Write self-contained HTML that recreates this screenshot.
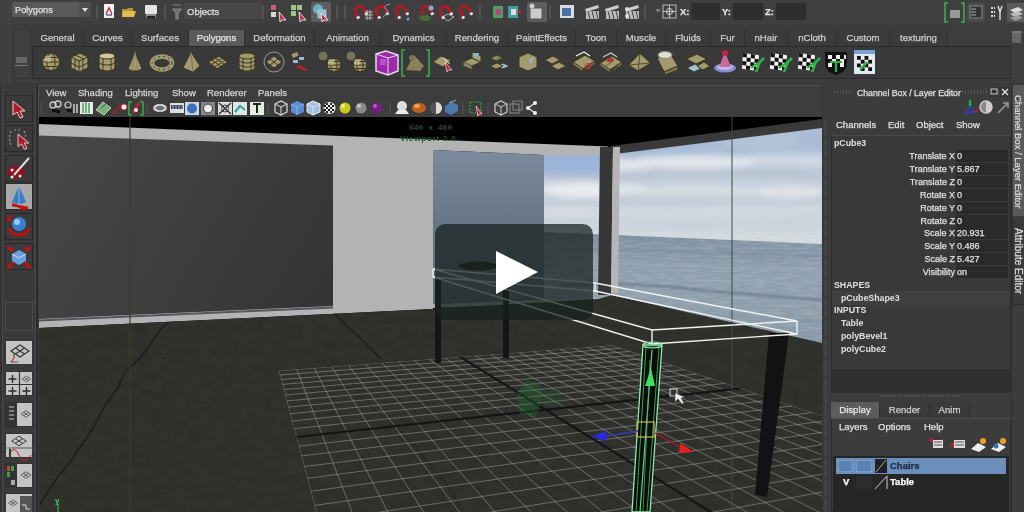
<!DOCTYPE html>
<html><head><meta charset="utf-8">
<style>
*{box-sizing:border-box;margin:0;padding:0}
html,body{width:1024px;height:512px;overflow:hidden;background:#3d3d3d;font-family:"Liberation Sans",sans-serif;color:#d6d6d6}
.a{position:absolute}
.t{position:absolute;white-space:nowrap;font-size:9.5px;line-height:12px}
.tab{position:absolute;top:30px;height:16px;background:#3b3b3b;border-right:1px solid #2f2f2f;font-size:9.6px;line-height:16px;text-align:center;color:#d0d0d0}
.tb{position:absolute;left:5px;width:28px;height:27px;background:#3a3a3a;border:1px solid #2a2a2a}
.lb{position:absolute;left:5px;width:28px;height:25px;background:#c4c4c4;border:1px solid #333}
.ch{position:absolute;left:834px;width:121px;text-align:right;font-size:9px;line-height:13px;color:#e0e0e0}
.cv{position:absolute;left:956px;width:52px;height:12px;background:#2a2a2a;font-size:9px;line-height:13px;color:#e0e0e0;padding-left:1px}
.it{position:absolute;font-size:8.8px;line-height:13px;color:#e0e0e0;font-weight:bold}
.t,.tab,.ch,.cv{-webkit-text-stroke:0.25px currentColor}
#w{position:absolute;left:0;top:0;width:1024px;height:512px;overflow:hidden;filter:blur(0.6px)}
</style></head><body><div id="w">
<!-- top toolbar -->
<div class="a" style="left:0;top:0;width:1024px;height:24px;background:#3f3f3f"></div>
<div class="a" style="left:12px;top:2px;width:79px;height:15px;background:#595959;border-radius:2px"></div>
<div class="a" style="left:79px;top:2px;width:12px;height:15px;background:#4f4f4f"></div>
<div class="t" style="left:15px;top:4px;color:#e0e0e0;font-size:9.2px">Polygons</div>
<div class="a" style="left:82px;top:8px;width:0;height:0;border-left:3px solid transparent;border-right:3px solid transparent;border-top:4px solid #ddd"></div>
<div class="a" style="left:184px;top:3px;width:78px;height:16px;background:#474747"></div>
<div class="t" style="left:187px;top:6px;color:#e0e0e0">Objects</div>
<div class="a" style="left:311px;top:2px;width:20px;height:20px;background:#5d5d5d;border-radius:2px"></div>
<div class="a" style="left:527px;top:2px;width:20px;height:20px;background:#5d5d5d;border-radius:2px"></div>
<div class="t" style="left:680px;top:6px;color:#e0e0e0;font-weight:bold">X:</div>
<div class="a" style="left:691px;top:3px;width:29px;height:17px;background:#2e2e2e"></div>
<div class="t" style="left:722px;top:6px;color:#e0e0e0;font-weight:bold">Y:</div>
<div class="a" style="left:733px;top:3px;width:30px;height:17px;background:#2e2e2e"></div>
<div class="t" style="left:765px;top:6px;color:#e0e0e0;font-weight:bold">Z:</div>
<div class="a" style="left:776px;top:3px;width:30px;height:17px;background:#2e2e2e"></div>
<!-- TOPICONS -->

<!-- shelf -->
<div class="a" style="left:0;top:24px;width:1024px;height:60px;background:#3d3d3d"></div>
<div class="a" style="left:13px;top:29px;width:18px;height:50px;background:#3f3f3f;border:1px solid #363636"></div>
<div class="a" style="left:16px;top:57px;width:11px;height:6px;background:#666"></div>
<div class="a" style="left:15px;top:65px;width:13px;height:1px;background:#777"></div>
<div class="tab" style="left:32px;width:52px">General</div>
<div class="tab" style="left:84px;width:48px">Curves</div>
<div class="tab" style="left:132px;width:57px">Surfaces</div>
<div class="tab" style="left:189px;width:56px;background:#5a5a5a;color:#e6e6e6">Polygons</div>
<div class="tab" style="left:245px;width:70px">Deformation</div>
<div class="tab" style="left:315px;width:66px">Animation</div>
<div class="tab" style="left:381px;width:66px">Dynamics</div>
<div class="tab" style="left:447px;width:61px">Rendering</div>
<div class="tab" style="left:508px;width:68px">PaintEffects</div>
<div class="tab" style="left:576px;width:41px">Toon</div>
<div class="tab" style="left:617px;width:49px">Muscle</div>
<div class="tab" style="left:666px;width:45px">Fluids</div>
<div class="tab" style="left:711px;width:34px">Fur</div>
<div class="tab" style="left:745px;width:43px">nHair</div>
<div class="tab" style="left:788px;width:49px">nCloth</div>
<div class="tab" style="left:837px;width:53px">Custom</div>
<div class="tab" style="left:890px;width:58px">texturing</div>
<div class="a" style="left:32px;top:46px;width:979px;height:33px;background:#393939;border:1px solid #2c2c2c;border-top-color:#2a2a2a"></div>
<div class="a" style="left:1012px;top:31px;width:9px;height:12px;background:#666;border-radius:2px"></div>
<!-- SHELFICONS -->
<div class="a" style="left:0;top:83px;width:1024px;height:2px;background:#3a3a3a"></div>

<!-- left toolbox -->
<div class="a" style="left:0;top:85px;width:38px;height:427px;background:#3a3a3a"></div>
<div class="a" style="left:0px;top:85px;width:2px;height:427px;background:#333"></div><div class="a" style="left:2px;top:85px;width:1px;height:427px;background:#484848"></div>
<div class="a" style="left:35px;top:85px;width:1px;height:427px;background:#4a4a4a"></div><div class="a" style="left:36px;top:85px;width:2px;height:427px;background:#2a2a2a"></div>
<div class="tb" style="top:95px"></div>
<div class="tb" style="top:125px"></div>
<div class="tb" style="top:155px"></div>
<div class="tb" style="top:183px;background:#a9a9a9"></div>
<div class="tb" style="top:213px"></div>
<div class="tb" style="top:243px"></div>
<div class="tb" style="top:302px;height:29px;background:#3a3a3a;border-color:#4a4a4a"></div>
<div class="lb" style="top:340px"></div>
<div class="lb" style="top:371px"></div>
<div class="lb" style="top:402px"></div>
<div class="lb" style="top:433px"></div>
<div class="lb" style="top:463px"></div>
<div class="lb" style="top:493px;height:22px"></div>
<!-- TOOLICONS -->

<!-- viewport panel -->
<div class="a" style="left:38px;top:85px;width:784px;height:32px;background:#3d3d3d;border-top:1px solid #4f4f4f;border-left:1px solid #4f4f4f"></div>
<div class="t" style="left:46px;top:87px">View</div>
<div class="t" style="left:78px;top:87px">Shading</div>
<div class="t" style="left:125px;top:87px">Lighting</div>
<div class="t" style="left:172px;top:87px">Show</div>
<div class="t" style="left:207px;top:87px">Renderer</div>
<div class="t" style="left:258px;top:87px">Panels</div>
<!-- VPICONS -->

<svg class="a" style="left:39px;top:117px" width="783" height="395" viewBox="39 117 783 395">
<defs>
<linearGradient id="sky" x1="0" y1="150" x2="0" y2="244" gradientUnits="userSpaceOnUse">
<stop offset="0" stop-color="#aabdd6"/><stop offset=".3" stop-color="#c3cedc"/><stop offset=".6" stop-color="#c9d2dc"/><stop offset=".85" stop-color="#ced7de"/><stop offset="1" stop-color="#d2dadf"/></linearGradient>
<linearGradient id="sea" x1="0" y1="232" x2="0" y2="345" gradientUnits="userSpaceOnUse">
<stop offset="0" stop-color="#7a8b9e"/><stop offset=".1" stop-color="#8495a6"/><stop offset=".4" stop-color="#8fa0ae"/><stop offset=".8" stop-color="#8c9dab"/><stop offset="1" stop-color="#8797a6"/></linearGradient>
<linearGradient id="glass" x1="0" y1="150" x2="0" y2="305" gradientUnits="userSpaceOnUse">
<stop offset="0" stop-color="#7b8b9d"/><stop offset=".48" stop-color="#677686"/><stop offset="1" stop-color="#5f6d7a"/></linearGradient>
<linearGradient id="dpanel" x1="39" y1="135" x2="333" y2="306" gradientUnits="userSpaceOnUse">
<stop offset="0" stop-color="#484848"/><stop offset="1" stop-color="#343434"/></linearGradient>
<filter id="noise" x="0" y="0" width="100%" height="100%" color-interpolation-filters="sRGB"><feTurbulence type="fractalNoise" baseFrequency="0.08 0.12" numOctaves="4" seed="3"/><feColorMatrix type="matrix" values="0 0 0 0 0.13  0 0 0 0 0.13  0 0 0 0 0.12  0 0 0 -2.2 1.25"/></filter>
<filter id="noise2" x="0" y="0" width="100%" height="100%"><feTurbulence type="fractalNoise" baseFrequency="0.06 0.4" numOctaves="3" seed="7"/><feColorMatrix type="matrix" values="0 0 0 0 1  0 0 0 0 1  0 0 0 0 1  0 0 0 -1.2 0.75"/></filter>
<filter id="blur3"><feGaussianBlur stdDeviation="3"/></filter>
<filter id="blur1"><feGaussianBlur stdDeviation="1"/></filter>
<clipPath id="skyclip"><polygon points="544,155 618,153 822,127 822,345 544,345"/></clipPath>
<clipPath id="gridclip"><polygon points="278.8,370.7 612.2,345.3 1003.6,476.7 341.5,607.3"/></clipPath>
</defs>
<rect x="39" y="117" width="783" height="395" fill="#000"/>
<g clip-path="url(#skyclip)">
<rect x="544" y="117" width="278" height="130" fill="url(#sky)"/>
<g filter="url(#blur3)">
<ellipse cx="660" cy="152" rx="50" ry="6" fill="#a6bbd6"/>
<ellipse cx="760" cy="140" rx="40" ry="8" fill="#b4c4d8"/>
<ellipse cx="593" cy="165" rx="63" ry="7" fill="#e6e9ed" opacity="0.90"/>
<ellipse cx="693" cy="162" rx="64" ry="7" fill="#e6e9ed" opacity="0.90"/>
<ellipse cx="802" cy="160" rx="72" ry="7" fill="#e6e9ed" opacity="0.54"/>
<ellipse cx="597" cy="176" rx="67" ry="4" fill="#b7c2d0" opacity="0.90"/>
<ellipse cx="691" cy="173" rx="46" ry="4" fill="#b7c2d0" opacity="0.72"/>
<ellipse cx="772" cy="173" rx="44" ry="4" fill="#b7c2d0" opacity="0.90"/>
<ellipse cx="870" cy="178" rx="79" ry="4" fill="#b7c2d0" opacity="0.54"/>
<ellipse cx="590" cy="189" rx="60" ry="6" fill="#e3e7eb" opacity="0.85"/>
<ellipse cx="701" cy="191" rx="74" ry="6" fill="#e3e7eb" opacity="0.51"/>
<ellipse cx="791" cy="192" rx="35" ry="6" fill="#e3e7eb" opacity="0.85"/>
<ellipse cx="862" cy="186" rx="38" ry="6" fill="#e3e7eb" opacity="0.51"/>
<ellipse cx="580" cy="202" rx="50" ry="4" fill="#bfc9d5" opacity="0.48"/>
<ellipse cx="670" cy="200" rx="64" ry="4" fill="#bfc9d5" opacity="0.64"/>
<ellipse cx="763" cy="202" rx="47" ry="4" fill="#bfc9d5" opacity="0.48"/>
<ellipse cx="843" cy="201" rx="53" ry="4" fill="#bfc9d5" opacity="0.48"/>
<ellipse cx="570" cy="212" rx="40" ry="5" fill="#dde2e7" opacity="0.60"/>
<ellipse cx="663" cy="213" rx="61" ry="5" fill="#dde2e7" opacity="0.36"/>
<ellipse cx="753" cy="211" rx="51" ry="5" fill="#dde2e7" opacity="0.36"/>
<ellipse cx="841" cy="209" rx="53" ry="5" fill="#dde2e7" opacity="0.36"/>
<ellipse cx="571" cy="224" rx="41" ry="3" fill="#c6cfd8" opacity="0.36"/>
<ellipse cx="638" cy="224" rx="53" ry="3" fill="#c6cfd8" opacity="0.36"/>
<ellipse cx="697" cy="227" rx="36" ry="3" fill="#c6cfd8" opacity="0.60"/>
<ellipse cx="781" cy="222" rx="48" ry="3" fill="#c6cfd8" opacity="0.36"/>
<ellipse cx="873" cy="226" rx="59" ry="3" fill="#c6cfd8" opacity="0.48"/>
<rect x="530" y="140" width="75" height="34" fill="#9cb5d8"/>
<ellipse cx="585" cy="190" rx="40" ry="8" fill="#e8ebef"/>
</g>
<polygon points="544,232 822,244 822,345 544,345" fill="url(#sea)"/>
<rect x="544" y="232" width="278" height="113" filter="url(#noise2)" opacity=".25"/>
<g filter="url(#blur1)" opacity=".6">
<path d="M560 285 Q620 282 680 288 T822 300" stroke="#5a6a7a" stroke-width="2.5" fill="none"/>
<path d="M560 262 L822 270" stroke="#9aabb8" stroke-width="3" fill="none"/><path d="M560 248 L822 256" stroke="#76889a" stroke-width="2" fill="none"/>
<path d="M560 305 L822 322" stroke="#7c8d9c" stroke-width="2" fill="none"/>
</g>
</g>
<!-- white wall -->
<polygon points="39,124 608,146.5 608,155 544,155 433,150 433,309 39,328" fill="#b3b3b3"/>
<!-- dark panel -->
<polygon points="39,135.5 333,145.5 333,306 39,319" fill="url(#dpanel)"/>
<polygon points="39,319.5 333,306.5 333,308.5 39,321.5" fill="#55565c"/>
<!-- glass -->
<polygon points="433,150 544,155 544,299 433,304" fill="url(#glass)"/>
<polygon points="433,304 600,297 600,301 433,308" fill="#a8aaae"/>
<!-- beam -->
<polygon points="611,146 822,119 822,128 611,154.5" fill="#393939"/>
<!-- pillar -->
<polygon points="600,147 613,147 611,295 598,295" fill="#363636"/>
<polygon points="613,147 620,147 618,293 611,293" fill="#b5b5b5"/>
<!-- floor -->
<polygon points="39,328 433,309 598,299 612,295 822,343 822,512 39,512" fill="#31312d"/>
<clipPath id="floorclip"><polygon points="39,328 433,309 598,299 612,295 822,343 822,512 39,512"/></clipPath>
<g clip-path="url(#floorclip)"><rect x="39" y="290" width="783" height="222" filter="url(#noise)" opacity=".22"/></g>
<g stroke="#1f1d1d" fill="none" stroke-width="1.6" stroke-linejoin="round">
<path d="M167 323L160 330L150 345L138 360L125 372L118 388L105 405L92 430L80 447L70 462L57 478L45 496L40 505"/>
<path d="M335 314L345 324L360 338L372 350L381 359"/>
<path d="M360 395L375 410L390 422L410 440L428 462L445 482L460 505" opacity=".5"/>
</g>
<g fill="#252321" opacity=".7"><ellipse cx="120" cy="380" rx="1.5" ry="2.5"/><ellipse cx="149" cy="390" rx="1.5" ry="1.5"/><ellipse cx="165" cy="358" rx="1" ry="1"/></g>
<!-- grid -->
<g clip-path="url(#gridclip)">
<path d="M278.8 370.7L349.4 637.1M296.7 369.3L396.6 627.0M314.3 368.0L441.5 617.5M331.6 366.7L484.5 608.3M348.7 365.4L525.5 599.6M365.4 364.1L564.7 591.2M381.9 362.8L602.3 583.2M398.0 361.6L638.4 575.5M414.0 360.4L672.9 568.2M429.6 359.2L706.1 561.1M445.0 358.0L738.0 554.3M475.1 355.7L798.2 541.5M489.8 354.6L826.6 535.5M504.2 353.5L854.0 529.6M518.5 352.4L880.4 524.0M532.5 351.3L905.9 518.6M546.3 350.3L930.5 513.3M559.9 349.3L954.3 508.3M573.2 348.2L977.3 503.4M586.4 347.2L999.5 498.6M599.4 346.2L1021.1 494.0M612.2 345.3L1041.9 489.6M278.8 370.7L612.2 345.3M279.9 375.0L621.1 348.2M281.1 379.6L630.4 351.4M282.4 384.4L640.2 354.7M283.8 389.6L650.5 358.1M285.2 395.0L661.4 361.8M286.8 400.9L672.8 365.6M288.4 407.1L684.8 369.7M290.2 413.8L697.6 373.9M292.1 421.0L711.1 378.5M294.2 428.7L725.4 383.3M298.8 446.1L756.8 393.8M301.4 455.9L774.1 399.6M304.2 466.6L792.6 405.8M307.3 478.3L812.3 412.5M310.8 491.3L833.6 419.6M314.5 505.5L856.5 427.3M318.7 521.4L881.2 435.6M323.4 539.1L908.0 444.6M328.7 559.0L937.1 454.4M334.7 581.6L968.9 465.1M341.5 607.3L1003.6 476.7" stroke="#a8a8a8" stroke-width="1" fill="none" opacity=".5"/>
<path d="M460.2 356.9L768.6 547.8" stroke="#141414" stroke-width="2.2"/>
<path d="M296.4 437.0L740.6 388.4" stroke="#141414" stroke-width="2.2"/>
</g>
<!-- green transparent chair -->
<g opacity=".3" fill="#1f7a34"><polygon points="517,392 526,381 540,383 542,400 536,416 520,414"/><polygon points="540,390 560,388 562,405 545,408" opacity=".6"/></g>
<!-- table legs -->
<polygon points="435,277 441,277 441,363 435,363" fill="#141414"/>
<polygon points="503,283 509,283 509,358 503,358" fill="#141414"/>
<polygon points="769,333 789,333 767,497 755,495" fill="#121212"/>
<!-- green vertical lines -->
<path d="M130 117V512" stroke="#234a30" stroke-width="1.2"/>
<path d="M732 117V512" stroke="#2a5444" stroke-width="1"/>
<!-- table top wireframe -->
<g stroke="#f2f2f2" stroke-width="1.4" fill="none">
<path d="M433 269L595 283L797 321L652 330Z"/>
<path d="M433 277L652 344L797 334"/>
<path d="M433 269V277M652 330V344M797 321V334"/>
<path d="M433 277L595 291L797 334"/><path d="M595 283V291"/>
</g>
<!-- selected leg -->
<polygon points="643,345 662,345 650,512 632,512" fill="#0c0c0c" stroke="#8ef0a8" stroke-width="1.3"/>
<polygon points="646,347 659,347 647,512 636,512" fill="none" stroke="#49c86a" stroke-width=".8"/>
<ellipse cx="652.5" cy="345" rx="9.5" ry="3" fill="none" stroke="#8ef0a8" stroke-width="1.2"/>
<path d="M652 350L640 512" stroke="#5fd880" stroke-width="1.2"/>
<path d="M650 360L643 512" stroke="#3fb060" stroke-width=".8"/>
<polygon points="651,368 645,386 655,386" fill="#3fe060"/>
<rect x="637" y="422" width="17" height="15" fill="none" stroke="#c9b84a" stroke-width="1.2"/>
<path d="M606 436L638 431" stroke="#3040b0" stroke-width="2" opacity=".8"/>
<polygon points="591,437 606,431 607,441" fill="#2a2ae0"/>
<path d="M655 433L680 447" stroke="#a02020" stroke-width="1.5" opacity=".8"/>
<polygon points="680,443 694,452 679,453" fill="#e02020"/>
<!-- cursor -->
<rect x="670" y="389" width="7" height="7" fill="none" stroke="#ddd" stroke-width="1"/>
<path d="M675 393 L675 402 L678 399 L682 404 L684 403 L681 398 L685 397 Z" fill="#eee" stroke="#333" stroke-width=".5"/>
<!-- viewport HUD text -->
<text x="409" y="130" font-family="Liberation Mono" font-size="8" font-weight="bold" fill="#2a4a3a">640 x 480</text>
<text x="400" y="141" font-family="Liberation Sans" font-size="8" font-weight="bold" letter-spacing=".8" fill="#1d5a2e">Viewport 2.0</text>
<text x="55" y="503" font-family="Liberation Sans" font-size="8" font-weight="bold" fill="#3fd050">y</text><path d="M58 504V512" stroke="#3fd050" stroke-width="1"/>
<ellipse cx="478" cy="266" rx="19" ry="4.5" fill="#222"/>
<!-- play overlay -->
<rect x="435" y="224" width="158" height="96" rx="10" fill="#17221f" opacity=".74"/>
<polygon points="496,251 538,272 496,294" fill="#fff"/>

</svg>

<!-- right panel -->
<div class="a" style="left:822px;top:85px;width:202px;height:427px;background:#3c3c3c"></div>
<div class="a" style="left:822px;top:85px;width:1px;height:427px;background:#333"></div>
<div class="t" style="left:857px;top:87px;color:#e0e0e0;font-size:8.7px">Channel Box / Layer Editor</div>
<div class="t" style="left:836px;top:119px;color:#e0e0e0">Channels</div>
<div class="t" style="left:888px;top:119px;color:#e0e0e0">Edit</div>
<div class="t" style="left:916px;top:119px;color:#e0e0e0">Object</div>
<div class="t" style="left:956px;top:119px;color:#e0e0e0">Show</div>
<div class="a" style="left:831px;top:135px;width:180px;height:258px;background:#393939;border:1px solid #2e2e2e;border-top-color:#4a4a4a"></div>
<div class="a" style="left:832px;top:369px;width:178px;height:23px;background:#303030"></div>
<div class="a" style="left:832px;top:291px;width:178px;height:14px;background:#3f3f3f"></div>
<div class="it" style="left:834px;top:137px">pCube3</div>
<div class="ch" style="top:150px">Translate X</div><div class="cv" style="top:150px">0</div>
<div class="ch" style="top:163px">Translate Y</div><div class="cv" style="top:163px">5.867</div>
<div class="ch" style="top:176px">Translate Z</div><div class="cv" style="top:176px">0</div>
<div class="ch" style="top:189px">Rotate X</div><div class="cv" style="top:189px">0</div>
<div class="ch" style="top:202px">Rotate Y</div><div class="cv" style="top:202px">0</div>
<div class="ch" style="top:215px">Rotate Z</div><div class="cv" style="top:215px">0</div>
<div class="ch" style="top:227px">Scale X</div><div class="cv" style="top:227px">20.931</div>
<div class="ch" style="top:240px">Scale Y</div><div class="cv" style="top:240px">0.486</div>
<div class="ch" style="top:253px">Scale Z</div><div class="cv" style="top:253px">5.427</div>
<div class="ch" style="top:266px">Visibility</div><div class="cv" style="top:266px">on</div>
<div class="it" style="left:834px;top:279px">SHAPES</div>
<div class="it" style="left:841px;top:292px">pCubeShape3</div>
<div class="it" style="left:834px;top:304px">INPUTS</div>
<div class="it" style="left:841px;top:317px">Table</div>
<div class="it" style="left:841px;top:330px">polyBevel1</div>
<div class="it" style="left:841px;top:343px">polyCube2</div>
<!-- vertical tabs -->
<div class="a" style="left:1013px;top:85px;width:11px;height:131px;background:#5a5a5a"></div>
<div class="a" style="left:1012px;top:218px;width:12px;height:87px;background:#393939;border-left:1px solid #2c2c2c;border-bottom:1px solid #2c2c2c"></div><div class="a" style="left:1011px;top:85px;width:1px;height:427px;background:#2e2e2e"></div>
<div class="t" style="left:1014px;top:95px;font-size:9.5px;transform-origin:0 0;transform:rotate(90deg) translate(0,-10px);color:#ddd">Channel Box / Layer Editor</div>
<div class="t" style="left:1014px;top:228px;font-size:10px;transform-origin:0 0;transform:rotate(90deg) translate(0,-10px);color:#ddd">Attribute Editor</div>
<!-- layer editor -->
<div class="a" style="left:831px;top:418px;width:180px;height:94px;background:#3c3c3c;border:1px solid #2e2e2e;border-top-color:#4a4a4a"></div>
<div class="tab" style="top:402px;left:831px;width:49px;height:16px;background:#5c5c5c;color:#e6e6e6">Display</div>
<div class="tab" style="top:402px;left:880px;width:50px;height:16px;background:#3a3a3a">Render</div>
<div class="tab" style="top:402px;left:930px;width:40px;height:16px;background:#3a3a3a">Anim</div>
<div class="t" style="left:839px;top:421px;color:#e0e0e0">Layers</div>
<div class="t" style="left:878px;top:421px;color:#e0e0e0">Options</div>
<div class="t" style="left:924px;top:421px;color:#e0e0e0">Help</div>
<div class="a" style="left:833px;top:456px;width:176px;height:56px;background:#262626"></div>
<div class="a" style="left:836px;top:458px;width:170px;height:16px;background:#6a8fba"></div>
<div class="a" style="left:838px;top:460px;width:15px;height:12px;background:#5b82b4;border:1px solid #7b9cc4"></div>
<div class="a" style="left:856px;top:460px;width:16px;height:12px;background:#5b82b4;border:1px solid #7b9cc4"></div>
<div class="a" style="left:875px;top:459px;width:12px;height:14px;background:#1e2228"></div>
<div class="t" style="left:890px;top:460px;color:#1c2a44;font-weight:bold">Chairs</div>
<div class="t" style="left:843px;top:476px;color:#fff;font-weight:bold">V</div>
<div class="a" style="left:856px;top:476px;width:16px;height:13px;background:#2c2c2c"></div>
<div class="t" style="left:890px;top:476px;color:#fff;font-weight:bold">Table</div>
<!-- RIGHTICONS -->
<svg class="a" style="left:0;top:0" width="1024" height="512" viewBox="0 0 1024 512">
<path d="M9.5 1V84" stroke="#4e4e4e" stroke-width="2" stroke-dasharray="1 1.2"/>
<path d="M97 5V19" stroke="#5a5a5a" stroke-width="1.5"/>
<path d="M165 5V19" stroke="#5a5a5a" stroke-width="1.5"/>
<path d="M263 5V19" stroke="#5a5a5a" stroke-width="1.5"/>
<path d="M337 5V19" stroke="#5a5a5a" stroke-width="1.5"/>
<path d="M345 5V19" stroke="#5a5a5a" stroke-width="1.5"/>
<path d="M480 5V19" stroke="#5a5a5a" stroke-width="1.5"/>
<path d="M550 5V19" stroke="#5a5a5a" stroke-width="1.5"/>
<path d="M645 5V19" stroke="#5a5a5a" stroke-width="1.5"/>
<rect x="104" y="4" width="10" height="14" fill="#f2f2f2"/><path d="M106 14L109 8L112 14" stroke="#c03030" stroke-width="1.5" fill="none"/><path d="M106 15H112" stroke="#3040a0" stroke-width="1.2"/>
<path d="M122 9H127L128 8H133V17H122Z" fill="#b9922c"/><path d="M123 11H136L134 17H122Z" fill="#e0bb50"/>
<rect x="145" y="5" width="12" height="9" fill="#e4e4e4" rx="1"/><rect x="146" y="14" width="10" height="4" fill="#8a8a8a"/><rect x="147" y="16" width="8" height="2" fill="#222"/>
<path d="M173 5H181M173 9H181L178 13V19H176V13Z" stroke="#888" stroke-width="1.2" fill="#666"/>
<rect x="271" y="5" width="5" height="5" fill="#d05a7a"/><rect x="271" y="12" width="5" height="5" fill="#ddd"/><path d="M279 12L286 20L282 20L280 22Z" fill="#c0304a" stroke="#fff" stroke-width=".8"/>
<rect x="291" y="5" width="5" height="5" fill="#9ac58a"/><rect x="297" y="5" width="5" height="5" fill="#9ac58a"/><rect x="291" y="11" width="5" height="5" fill="#9ac58a"/><path d="M299 12L306 20L302 20L300 22Z" fill="#c0304a" stroke="#fff" stroke-width=".8"/>
<circle cx="318" cy="9" r="5" fill="#6ab0c0"/><rect x="318" y="10" width="8" height="8" fill="#8ac0d0" stroke="#ddd" stroke-width=".6"/><path d="M321 13L328 20L324 20L322 22Z" fill="#c0304a" stroke="#fff" stroke-width=".8"/>
<g transform="rotate(-25 360 12)"><path d="M356 16V11A4.5 4.5 0 0 1 365 11V16" stroke="#a81c28" stroke-width="3.2" fill="none"/><rect x="354.5" y="15" width="3" height="2.5" fill="#eee"/><rect x="363.5" y="15" width="3" height="2.5" fill="#eee"/></g>
<g transform="rotate(-25 381 12)"><path d="M377 16V11A4.5 4.5 0 0 1 386 11V16" stroke="#a81c28" stroke-width="3.2" fill="none"/><rect x="375.5" y="15" width="3" height="2.5" fill="#eee"/><rect x="384.5" y="15" width="3" height="2.5" fill="#eee"/></g>
<g transform="rotate(-25 401 12)"><path d="M397 16V11A4.5 4.5 0 0 1 406 11V16" stroke="#a81c28" stroke-width="3.2" fill="none"/><rect x="395.5" y="15" width="3" height="2.5" fill="#eee"/><rect x="404.5" y="15" width="3" height="2.5" fill="#eee"/></g>
<g transform="rotate(-25 426 12)"><path d="M422 16V11A4.5 4.5 0 0 1 431 11V16" stroke="#a81c28" stroke-width="3.2" fill="none"/><rect x="420.5" y="15" width="3" height="2.5" fill="#eee"/><rect x="429.5" y="15" width="3" height="2.5" fill="#eee"/></g>
<g transform="rotate(-25 445 12)"><path d="M441 16V11A4.5 4.5 0 0 1 450 11V16" stroke="#a81c28" stroke-width="3.2" fill="none"/><rect x="439.5" y="15" width="3" height="2.5" fill="#eee"/><rect x="448.5" y="15" width="3" height="2.5" fill="#eee"/></g>
<g transform="rotate(-25 465 12)"><path d="M461 16V11A4.5 4.5 0 0 1 470 11V16" stroke="#a81c28" stroke-width="3.2" fill="none"/><rect x="459.5" y="15" width="3" height="2.5" fill="#eee"/><rect x="468.5" y="15" width="3" height="2.5" fill="#eee"/></g>
<path d="M365 12H373M365 15H373M365 18H373M367 10V20M370 10V20" stroke="#ccc" stroke-width=".8"/>
<path d="M383 17Q390 12 386 9Q382 6 390 4" stroke="#8aa0c0" stroke-width="1" fill="none"/>
<circle cx="408" cy="19" r="1.5" fill="#6aa0d0"/>
<circle cx="431" cy="8" r="2.5" fill="#7ab0d0"/><ellipse cx="425" cy="18" rx="6" ry="3" fill="#4a6a3a"/>
<path d="M448 14L454 17L448 21L442 17Z" stroke="#ccc" stroke-width=".8" fill="none"/>
<rect x="493" y="6" width="10" height="12" fill="#4aa060"/><rect x="496" y="9" width="5" height="6" fill="#c04080"/>
<rect x="508" y="6" width="10" height="12" fill="#40a0a0"/><rect x="511" y="9" width="5" height="6" fill="#ddd"/><rect x="518" y="10" width="3" height="3" fill="#c02020"/>
<rect x="530" y="8" width="12" height="11" fill="#ccc" stroke="#555" stroke-width="1"/><circle cx="532" cy="6" r="2.5" fill="#ccc"/>
<rect x="560" y="5" width="14" height="13" fill="#d8dde6"/><rect x="562" y="8" width="9" height="8" fill="#4a70a8"/>
<path d="M585 9L598 5L599 8L586 12Z" fill="#ccc"/><rect x="586" y="11" width="13" height="8" fill="#bbb"/><path d="M588 11L590 19M592 11L594 19M596 11L598 19" stroke="#444" stroke-width="1"/>
<path d="M605 9L618 5L619 8L606 12Z" fill="#ccc"/><rect x="606" y="11" width="13" height="8" fill="#bbb"/><path d="M608 11L610 19M612 11L614 19M616 11L618 19" stroke="#444" stroke-width="1"/>
<path d="M625 9L638 5L639 8L626 12Z" fill="#ccc"/><rect x="626" y="11" width="13" height="8" fill="#bbb"/><path d="M628 11L630 19M632 11L634 19M636 11L638 19" stroke="#444" stroke-width="1"/>
<circle cx="627" cy="9" r="2" fill="#ddd"/><circle cx="627" cy="16" r="2" fill="#ddd"/>
<path d="M655 9L661 9L658 13Z" fill="#777"/><rect x="663" y="5" width="13" height="13" fill="none" stroke="#bbb" stroke-width="1"/><circle cx="669.5" cy="11.5" r="3" fill="none" stroke="#ddd" stroke-width="1"/><path d="M669.5 5V18M663 11.5H676" stroke="#ddd" stroke-width=".8"/>
<path d="M948 3H945V22H948M961 3H964V22H961" stroke="#3fb050" stroke-width="1.5" fill="none"/><rect x="950" y="10" width="10" height="8" fill="#999"/>
<rect x="967" y="3" width="18" height="19" rx="2" fill="#4a4a4a"/><rect x="970" y="6" width="12" height="12" fill="#333" stroke="#888" stroke-width="1"/><path d="M971 9H976M971 12H976M971 15H976" stroke="#aaa"/>
<path d="M991 8H995M991 12H995M991 16H995" stroke="#ddd" stroke-width="2" stroke-dasharray="2 1"/><path d="M998 6L1000 12L1002 6M1000 12V20" stroke="#eee" stroke-width="1.3" fill="none"/>
<rect x="1007" y="3" width="17" height="19" fill="#5a5a5a"/><path d="M1010 10L1018 7L1023 10L1015 13Z" fill="#ddd"/><path d="M1010 14L1018 11L1023 14L1015 17Z" fill="#bbb"/><path d="M1010 18L1018 15L1023 18L1015 21Z" fill="#999"/>
<circle cx="51" cy="62" r="9" fill="#a29b70" stroke="#3c3820" stroke-width="1.5"/><ellipse cx="51" cy="62" rx="4.05" ry="9" fill="none" stroke="#3c3820" stroke-width="1"/><path d="M42 62H60M43.5 57.5H58.5M43.5 66.5H58.5" stroke="#3c3820" stroke-width="1"/><circle cx="48" cy="59" r="3" fill="#cfc9a0" opacity=".7"/>
<path d="M71 57L80 53L88 57V68L79 72L71 68Z" fill="#a29b70" stroke="#3c3820" stroke-width="1.2"/><path d="M71 57L79 61L88 57M79 61V72M75 55L84 59M75 59V70M83 59V70M71 63L79 67L88 63" stroke="#3c3820" stroke-width="1" fill="none"/>
<path d="M99 56V68A8 3 0 0 0 115 68V56Z" fill="#a39d70" stroke="#3c3820" stroke-width="1.2"/><ellipse cx="107" cy="56" rx="8" ry="3" fill="#cfc9a0" stroke="#3c3820"/><path d="M99 62A8 3 0 0 0 115 62M103 58V70M111 58V70" stroke="#3c3820" fill="none"/>
<path d="M135 52L128 69Q135 73 142 69Z" fill="#a29b70" stroke="#3c3820" stroke-width="1"/><path d="M135 52L132 71M135 52L138 71" stroke="#8a8560" stroke-width=".8"/>
<ellipse cx="162" cy="63" rx="10" ry="6.5" fill="none" stroke="#a29b70" stroke-width="4.5"/><ellipse cx="162" cy="63" rx="10" ry="6.5" fill="none" stroke="#3c3820" stroke-width="1" stroke-dasharray="2 3"/>
<path d="M191 52L183 68L193 72L200 66Z" fill="#a29b70" stroke="#3c3820" stroke-width="1"/><path d="M191 52L193 72" stroke="#7d7850" stroke-width="1"/>
<path d="M208 62L219 56L228 62L217 69Z" fill="#a29b70" stroke="#3c3820" stroke-width="1.2"/><path d="M211.7 60L220.5 66M215.3 58L224 64M211.7 64.3L222.7 58M215 66.5L225.7 60" stroke="#3c3820" stroke-width="1"/>
<path d="M239 56V68A8 3 0 0 0 255 68V56Z" fill="#a39d70" stroke="#3c3820" stroke-width="1.2"/><ellipse cx="247" cy="56" rx="8" ry="3" fill="#a29b70" stroke="#3c3820"/><path d="M239 60A8 3 0 0 0 255 60M239 64A8 3 0 0 0 255 64M243 58V70M251 58V70" stroke="#3c3820" fill="none"/>
<circle cx="274" cy="62" r="10" fill="#3a3a3a" stroke="#999" stroke-width="1"/><path d="M266 62L274 56L282 62L274 68Z" fill="#a29b70" stroke="#3c3820"/><path d="M270 59L278 65M270 65L278 59" stroke="#3c3820"/>
<rect x="292" y="53" width="6" height="4" fill="#a29b70" transform="rotate(-20 295 55)"/><rect x="299" y="57" width="5" height="3" fill="#9ab8d0"/><rect x="293" y="60" width="5" height="3" fill="#9ab8d0"/><path d="M297 66L306 70" stroke="#c02020" stroke-width="2.5"/>
<circle cx="323" cy="56" r="5" fill="#777257" stroke="#333"/>
<circle cx="334" cy="65" r="7" fill="#a29b70" stroke="#3c3820" stroke-width="1.5"/><ellipse cx="334" cy="65" rx="3.15" ry="7" fill="none" stroke="#3c3820" stroke-width="1"/><path d="M327 65H341M328.5 61.5H339.5M328.5 68.5H339.5" stroke="#3c3820" stroke-width="1"/><circle cx="331" cy="62" r="3" fill="#cfc9a0" opacity=".7"/>
<circle cx="351" cy="56" r="5" fill="#777257" stroke="#333"/>
<circle cx="360" cy="65" r="7" fill="#a29b70" stroke="#3c3820" stroke-width="1.5"/><ellipse cx="360" cy="65" rx="3.15" ry="7" fill="none" stroke="#3c3820" stroke-width="1"/><path d="M353 65H367M354.5 61.5H365.5M354.5 68.5H365.5" stroke="#3c3820" stroke-width="1"/><circle cx="357" cy="62" r="3" fill="#cfc9a0" opacity=".7"/>
<path d="M376 54L386 51L398 55V71L388 75L376 71Z" fill="#9a2aa8" stroke="#e8d8f0" stroke-width="1.5"/><path d="M376 54L388 58L398 55M388 58V75" stroke="#e8d8f0" stroke-width="1" fill="none"/><rect x="380" y="59" width="6" height="6" fill="#c04ad0"/>
<path d="M405 50H402V76H405M426 50H429V76H426" stroke="#3fb050" stroke-width="1.5" fill="none"/><path d="M414 55L406 70L420 71L424 66Z" fill="#8a8258"/><circle cx="412" cy="58" r="3" fill="#7a7550"/>
<path d="M433 62L441 56L451 60L443 67Z" fill="#a29b70" stroke="#3c3820"/><path d="M443 58L450 64" stroke="#eee"/><path d="M445 62L452 70L448 70L447 72Z" fill="#c02030" stroke="#fff" stroke-width=".6"/>
<path d="M463 62L472 58L481 62L472 66Z" fill="#a29b70" stroke="#3c3820"/><path d="M472 58V52L481 56V62Z" fill="#a8a27a" stroke="#3c3820"/><rect x="474" y="53" width="5" height="3" fill="#7ab8d8"/><path d="M463 62V66L472 70V66" fill="#8a8560" stroke="#3c3820"/>
<path d="M490 58L497 55L503 58L496 61Z" fill="#8a8560" stroke="#3c3820"/><path d="M496 66L503 63L510 66L503 69Z" fill="#9ab8d0" stroke="#3c3820"/><path d="M490 66L497 63L503 66L496 69Z" fill="#a29b70" stroke="#3c3820"/>
<path d="M519 57L528 53L537 57V67L528 71L519 67Z" fill="#a29b70" stroke="#3c3820"/><path d="M528 60L534 57L531 64Z" fill="#8ab8d0"/>
<path d="M545 60L553 56L560 60L552 64Z" fill="#a29b70" stroke="#3c3820"/><path d="M551 66L559 62L566 66L558 70Z" fill="#a29b70" stroke="#3c3820"/>
<path d="M573 62L585 55L595 61L583 69Z" fill="#a29b70" stroke="#3c3820" stroke-width="1.2"/><path d="M573 62V65L583 72V69M583 72L595 64V61" fill="#7a7450" stroke="#3c3820"/><path d="M576 56L584 52L590 56" stroke="#eee" stroke-width="1.2" fill="none"/><circle cx="588" cy="66" r="2.5" fill="none" stroke="#d03030" stroke-width="1.2"/>
<path d="M600 63L612 56L622 62L610 70Z" fill="#a29b70" stroke="#3c3820" stroke-width="1.2"/><path d="M600 63V66L610 73V70M610 73L622 65V62" fill="#7a7450" stroke="#3c3820"/><path d="M603 57L611 53L617 57" stroke="#ccc" stroke-width="1.2" fill="none"/><rect x="607" y="58" width="6" height="4" fill="#c83030"/><path d="M606 66L614 60" stroke="#555"/>
<path d="M628 65L640 53L651 63L638 71Z" fill="#a29b70" stroke="#3c3820" stroke-width="1.2"/><path d="M640 53L638 71M628 65L651 63" stroke="#3c3820" stroke-width=".8"/>
<path d="M657 58L670 53L678 66L664 72Z" fill="#a29b70" stroke="#3c3820" stroke-width="1.2"/><ellipse cx="665" cy="55" rx="7" ry="3.5" fill="#e0e0d0" stroke="#888"/><path d="M664 72L678 66V70L665 75Z" fill="#7a7450" stroke="#3c3820"/>
<path d="M686 59L697 54L707 59L696 64Z" fill="#a29b70" stroke="#3c3820" stroke-width="1.2"/><path d="M687 68L695 64L702 68L694 72Z" fill="#9ac0dc" stroke="#3c3820"/><path d="M697 66L704 62L710 66L703 70Z" fill="#a29b70" stroke="#3c3820"/>
<ellipse cx="725" cy="68" rx="11" ry="4.5" fill="#8a88d0"/><ellipse cx="725" cy="67" rx="8" ry="3" fill="#c0c0f0"/><path d="M725 52L719 67H731Z" fill="#c86aa0"/><circle cx="725" cy="53" r="3" fill="#c02848"/>
<g transform="translate(743 53) skewY(8) skewX(-4)"><path d="M0 0L16 0L16 16L0 16Z" fill="#f2f2f2"/><rect x="0" y="0" width="4" height="4" fill="#111"/><rect x="0" y="8" width="4" height="4" fill="#111"/><rect x="4" y="4" width="4" height="4" fill="#111"/><rect x="4" y="12" width="4" height="4" fill="#111"/><rect x="8" y="0" width="4" height="4" fill="#111"/><rect x="8" y="8" width="4" height="4" fill="#111"/><rect x="12" y="4" width="4" height="4" fill="#111"/><rect x="12" y="12" width="4" height="4" fill="#111"/></g>
<path d="M751 68L760 62L764 58M760 62L756 72" stroke="#30b048" stroke-width="2.5" fill="none"/>
<g transform="translate(771 53) skewY(8) skewX(-4)"><path d="M0 0L16 0L16 16L0 16Z" fill="#f2f2f2"/><rect x="0" y="0" width="4" height="4" fill="#111"/><rect x="0" y="8" width="4" height="4" fill="#111"/><rect x="4" y="4" width="4" height="4" fill="#111"/><rect x="4" y="12" width="4" height="4" fill="#111"/><rect x="8" y="0" width="4" height="4" fill="#111"/><rect x="8" y="8" width="4" height="4" fill="#111"/><rect x="12" y="4" width="4" height="4" fill="#111"/><rect x="12" y="12" width="4" height="4" fill="#111"/></g>
<path d="M779 68L788 62L792 58M788 62L784 72" stroke="#30b048" stroke-width="2.5" fill="none"/>
<g transform="translate(799 53) skewY(8) skewX(-4)"><path d="M0 0L16 0L16 16L0 16Z" fill="#f2f2f2"/><rect x="0" y="0" width="4" height="4" fill="#111"/><rect x="0" y="8" width="4" height="4" fill="#111"/><rect x="4" y="4" width="4" height="4" fill="#111"/><rect x="4" y="12" width="4" height="4" fill="#111"/><rect x="8" y="0" width="4" height="4" fill="#111"/><rect x="8" y="8" width="4" height="4" fill="#111"/><rect x="12" y="4" width="4" height="4" fill="#111"/><rect x="12" y="12" width="4" height="4" fill="#111"/></g>
<path d="M807 68L816 62L820 58M816 62L812 72" stroke="#30b048" stroke-width="2.5" fill="none"/>
<path d="M825 52H847V63Q847 72 836 75Q825 72 825 63Z" fill="#111"/><path d="M828 55H832V59H828ZM836 55H840V59H836ZM844 55H846V59H844ZM832 59H836V63H832ZM840 59H844V63H840ZM828 63H832V67H828ZM840 63H844V67H840Z" fill="#f0f0f0"/><path d="M830 62H842M836 62V72" stroke="#30b048" stroke-width="2.2"/>
<rect x="854" y="50" width="21" height="24" fill="#dfe7f0"/><rect x="854" y="50" width="21" height="4" fill="#7aa0d0"/>
<rect x="857" y="56" width="15" height="15" fill="#f4f4f4"/><rect x="857.0" y="56.0" width="3.8" height="3.8" fill="#111"/><rect x="857.0" y="63.5" width="3.8" height="3.8" fill="#111"/><rect x="860.8" y="59.8" width="3.8" height="3.8" fill="#111"/><rect x="860.8" y="67.2" width="3.8" height="3.8" fill="#111"/><rect x="864.5" y="56.0" width="3.8" height="3.8" fill="#111"/><rect x="864.5" y="63.5" width="3.8" height="3.8" fill="#111"/><rect x="868.2" y="59.8" width="3.8" height="3.8" fill="#111"/><rect x="868.2" y="67.2" width="3.8" height="3.8" fill="#111"/>
<path d="M860 70L867 62" stroke="#30b048" stroke-width="2.5"/>
<rect x="1013" y="33" width="8" height="10" rx="1" fill="#666"/><rect x="1012" y="31" width="10" height="2" fill="#777"/>
<path d="M41 103V114" stroke="#555"/>
<circle cx="53" cy="105" r="3" fill="none" stroke="#ccc" stroke-width="1.3"/><circle cx="58" cy="104" r="3" fill="none" stroke="#ccc" stroke-width="1.3"/><path d="M52 110L60 112" stroke="#111" stroke-width="3"/>
<circle cx="68" cy="105" r="3" fill="none" stroke="#ccc" stroke-width="1.2"/><path d="M67 110L72 111" stroke="#111" stroke-width="3"/><path d="M74 104V113M77 104V113" stroke="#ccc" stroke-width="1.5"/>
<rect x="80" y="102" width="13" height="12" fill="#e8e8e8"/><path d="M83 103V113M86 102V113M89 103V113" stroke="#2a9a3a" stroke-width="1.3"/>
<path d="M96 110L103 102L111 108L104 115Z" fill="#7ab07a" stroke="#ddd" stroke-width=".8"/><path d="M101 108L106 104" stroke="#2a6a2a"/>
<path d="M113 114L121 105" stroke="#a02020" stroke-width="2"/><circle cx="124" cy="107" r="3" fill="#eee" stroke="#c03030"/>
<path d="M132 102H129V115H132M140 102H143V115H140" stroke="#30b040" stroke-width="1.5" fill="none"/><path d="M133 113L139 103" stroke="#c02030" stroke-width="3"/><circle cx="136" cy="110" r="2" fill="#eee"/>
<path d="M147 103V114" stroke="#555"/>
<ellipse cx="160" cy="108" rx="7" ry="4" fill="#ddd"/><ellipse cx="160" cy="108" rx="4" ry="2" fill="#555"/><path d="M153 108H167M160 104V112" stroke="#888" stroke-width=".8"/>
<rect x="170" y="103" width="14" height="10" fill="#ddd"/><path d="M171 105H183V109H171Z" fill="#2a3a5a"/><path d="M173 105V109M176 105V109M179 105V109M182 105V109" stroke="#ddd" stroke-width=".8"/>
<rect x="185" y="102" width="14" height="13" fill="#c8d4e4"/><circle cx="192" cy="108.5" r="5" fill="#3a70b8"/>
<rect x="201" y="102" width="14" height="13" fill="#888"/><circle cx="208" cy="108.5" r="4.5" fill="#eee" stroke="#333"/>
<rect x="218" y="102" width="14" height="13" fill="#ddd"/><path d="M219 103L231 114M231 103L219 114" stroke="#333" stroke-width="1.5"/><circle cx="225" cy="108.5" r="3.5" fill="none" stroke="#333"/>
<rect x="233" y="102" width="14" height="13" fill="#dde8e0"/><path d="M235 112L240 106L245 110" stroke="#30a0a0" stroke-width="2" fill="none"/>
<rect x="250" y="102" width="14" height="13" fill="#e4ece4"/><path d="M253 104H261M257 104V113" stroke="#222" stroke-width="2"/>
<path d="M268 103V114" stroke="#555"/>
<path d="M275 104L281 101L287 104V112L281 115L275 112Z" fill="none" stroke="#ddd" stroke-width="1.2"/><path d="M275 104L281 107L287 104M281 107V115" stroke="#ddd" stroke-width="1" fill="none"/>
<path d="M291 104L297 101L304 104V112L297 115L291 112Z" fill="#5a8ad0"/><path d="M291 104L297 107L304 104M297 107V115" stroke="#9ac0f0" stroke-width=".8" fill="none"/>
<path d="M307 104L313 101L320 104V112L313 115L307 112Z" fill="#a0c0e8" stroke="#eee"/><path d="M307 104L313 107L320 104M313 107V115" stroke="#eee" stroke-width=".8" fill="none"/>
<circle cx="329.5" cy="108" r="6" fill="#eee"/><path d="M324 106H335M324 110H335M327 103V114M331 103V114" stroke="#111" stroke-width="1.8" stroke-dasharray="2 2"/>
<circle cx="345" cy="108" r="5.5" fill="#c8c820"/><circle cx="343" cy="106" r="2" fill="#f0f080"/>
<circle cx="361" cy="108" r="5.5" fill="#8a8a8a"/><circle cx="359" cy="106" r="2" fill="#c8c8c8"/>
<circle cx="377" cy="108" r="5.5" fill="#702080"/><circle cx="375" cy="106" r="2" fill="#b060c0"/>
<path d="M390 103V114" stroke="#555"/>
<circle cx="402" cy="106" r="5" fill="#ddd"/><path d="M395 114L398 110H406L409 114Z" fill="#eee"/>
<ellipse cx="419" cy="108" rx="7" ry="5" fill="#c06020"/><ellipse cx="417" cy="106" rx="3" ry="2" fill="#f0a050"/>
<circle cx="436" cy="108" r="6" fill="#555"/><path d="M436 102A6 6 0 0 1 436 114Z" fill="#ddd"/>
<path d="M445 106L452 102L458 105V111L451 115L445 112Z" fill="#4a7ab0"/><path d="M449 103L456 100" stroke="#aaa"/>
<path d="M463 103V114" stroke="#555"/>
<rect x="470" y="102" width="11" height="11" fill="none" stroke="#30a040" stroke-width="1.2" stroke-dasharray="2 1"/><path d="M476 106L482 114L479 114L478 116Z" fill="#c02030" stroke="#fff" stroke-width=".6"/>
<path d="M488 103V114" stroke="#555"/>
<path d="M495 104L501 101L507 104V112L501 115L495 112Z" fill="none" stroke="#ccc" stroke-width="1.2"/><path d="M495 104L501 107L507 104M501 107V115" stroke="#ccc" stroke-width="1" fill="none"/>
<rect x="510" y="104" width="9" height="9" fill="none" stroke="#888"/><rect x="513" y="101" width="9" height="9" fill="none" stroke="#888"/>
<circle cx="528" cy="108" r="2" fill="#eee"/><circle cx="535" cy="103" r="2" fill="#eee"/><circle cx="535" cy="113" r="2" fill="#eee"/><path d="M528 108L535 103M528 108L535 113" stroke="#eee" stroke-width="1.2"/>
<path transform="translate(13 101) scale(1.0)" d="M0 0L0 14L4 11L7 17L10 16L7 10L12 10Z" fill="#b01828" stroke="#f0d0d0" stroke-width="1"/>
<path d="M11 131Q8 138 11 145M14 130H22M24 131Q27 136 24 140" stroke="#999" stroke-width="1.2" fill="none" stroke-dasharray="2 2"/>
<path transform="translate(18 134) scale(0.9)" d="M0 0L0 14L4 11L7 17L10 16L7 10L12 10Z" fill="#b01828" stroke="#f0d0d0" stroke-width="1"/>
<ellipse cx="16" cy="172" rx="9" ry="6" fill="#901020"/><path d="M14 175L29 158" stroke="#ddd" stroke-width="2"/><circle cx="12" cy="170" r="1.5" fill="#eee"/><circle cx="20" cy="176" r="1.5" fill="#eee"/><circle cx="12" cy="177" r="1.5" fill="#eee"/>
<path d="M19 186L12 202Q19 206 26 202Z" fill="#3a7ac0"/><path d="M19 186L19 205" stroke="#8ac0f0" stroke-width="1"/><path d="M10 202L27 209L24 211Z" fill="#c01010"/><path d="M12 205L28 208" stroke="#c01010" stroke-width="2.5"/>
<circle cx="19" cy="224" r="7" fill="#3a80d0"/><circle cx="17" cy="222" r="3" fill="#9ac8f0"/><path d="M9 228Q12 236 19 235M29 228Q26 236 19 235M9 222Q8 218 11 216" stroke="#c01010" stroke-width="3" fill="none"/>
<path d="M12 254L19 250L26 254V261L19 265L12 261Z" fill="#6aa0e0"/><path d="M12 254L19 258L26 254" stroke="#cde" fill="none"/><path d="M8 247L13 251M30 247L25 251M8 268L13 263M30 268L25 263" stroke="#c01010" stroke-width="3.5"/>
<path transform="translate(20 351) scale(1)" d="M-9 0L0-6L9 0L0 6ZM-4.5-3L4.5 3M4.5-3L-4.5 3" fill="none" stroke="#333" stroke-width="1.2"/>
<path d="M11 362L14 358M14 362H18M14 358V354" stroke="#c03030" stroke-width="1.2" fill="none"/><path d="M11 362L14 362" stroke="#3040c0" stroke-width="1.2"/><path d="M14 358V354" stroke="#30a040" stroke-width="1.2"/>
<path d="M6 384.5H33M19.5 372V398" stroke="#333" stroke-width="1.2"/>
<path d="M12.5 375V383M8.5 379H16.5M12.5 387V395M8.5 391H16.5M26.5 387V395M22.5 391H30.5" stroke="#2a2a2a" stroke-width="1.4"/>
<path transform="translate(26.5 379) scale(0.5)" d="M-9 0L0-6L9 0L0 6ZM-4.5-3L4.5 3M4.5-3L-4.5 3" fill="none" stroke="#333" stroke-width="1.2"/>
<rect x="6" y="403" width="11" height="25" fill="#333"/><path d="M9 407H14M9 411H14M9 415H14M9 419H14" stroke="#ccc" stroke-width="1"/>
<path transform="translate(26 414) scale(0.55)" d="M-9 0L0-6L9 0L0 6ZM-4.5-3L4.5 3M4.5-3L-4.5 3" fill="none" stroke="#333" stroke-width="1.2"/>
<path transform="translate(19 441) scale(0.8)" d="M-9 0L0-6L9 0L0 6ZM-4.5-3L4.5 3M4.5-3L-4.5 3" fill="none" stroke="#333" stroke-width="1.2"/>
<path d="M7 448H33" stroke="#555"/><path d="M9 455Q14 444 19 455T31 455" stroke="#c02020" fill="none"/><path d="M10 449V457" stroke="#333" stroke-width="2"/>
<rect x="6" y="464" width="11" height="24" fill="#333"/><rect x="7" y="466" width="3" height="5" fill="#c04040"/><rect x="11" y="466" width="3" height="5" fill="#40a040"/><rect x="7" y="472" width="3" height="5" fill="#40a040"/><rect x="11" y="480" width="4" height="5" fill="#aaa"/>
<path transform="translate(26 475) scale(0.55)" d="M-9 0L0-6L9 0L0 6ZM-4.5-3L4.5 3M4.5-3L-4.5 3" fill="none" stroke="#333" stroke-width="1.2"/>
<path transform="translate(13 503) scale(0.5)" d="M-9 0L0-6L9 0L0 6ZM-4.5-3L4.5 3M4.5-3L-4.5 3" fill="none" stroke="#333" stroke-width="1.2"/>
<rect x="20" y="496" width="12" height="16" fill="#555"/><path d="M22 505H26V509H30" stroke="#ddd" fill="none"/>
<path d="M825.5 120V512" stroke="#5a5a5a" stroke-width="1.5" stroke-dasharray="1 1.5"/>
<path d="M834 92H850M962 92H1000" stroke="#5a5a5a" stroke-width="3" stroke-dasharray="1 2"/>
<rect x="989" y="87" width="9" height="10" fill="#333"/><rect x="991" y="89" width="6" height="5" fill="none" stroke="#ccc"/>
<rect x="1000" y="87" width="10" height="10" fill="#333"/><path d="M1002 89L1008 95M1008 89L1002 95" stroke="#ddd" stroke-width="1.5"/>
<path d="M970 106L975 112L966 113Z" fill="none" stroke="#3040c0" stroke-width="1.5"/><path d="M970 100V106" stroke="#20b030" stroke-width="2.5"/><path d="M975 112L978 110" stroke="#c02030" stroke-width="2"/>
<circle cx="986" cy="107" r="6" fill="#888" stroke="#ccc" stroke-width="1.5"/><path d="M986 101A6 6 0 0 1 986 113Z" fill="#ccc"/>
<path d="M998 113L1008 103M1003 103H1008V108" stroke="#999" stroke-width="1.5" fill="none"/>
<path d="M880 396H960" stroke="#5a5a5a" stroke-width="2" stroke-dasharray="1 2"/>
<rect x="933" y="440" width="10" height="8" fill="#ddd"/><path d="M934 442H942M934 445H942" stroke="#555"/><rect x="930" y="438" width="3" height="4" fill="#c02020"/>
<rect x="954" y="440" width="11" height="8" fill="#ddd"/><path d="M955 442H964M955 445H964" stroke="#555"/><rect x="951" y="443" width="3" height="4" fill="#c02020"/>
<path d="M971 449L978 443L986 447L979 452Z" fill="#eee"/><circle cx="983" cy="441" r="3" fill="#f0a020"/>
<path d="M991 449L998 443L1006 447L999 452Z" fill="#eee"/><circle cx="996" cy="446" r="2.5" fill="#3a70c0"/><circle cx="1003" cy="441" r="3" fill="#f0a020"/>
<path d="M876 472L886 460" stroke="#c8a060" stroke-width="1"/>
<path d="M875 489L887 476V489" stroke="#ccc" fill="none" stroke-width="1"/>

</svg>
</div></body></html>
